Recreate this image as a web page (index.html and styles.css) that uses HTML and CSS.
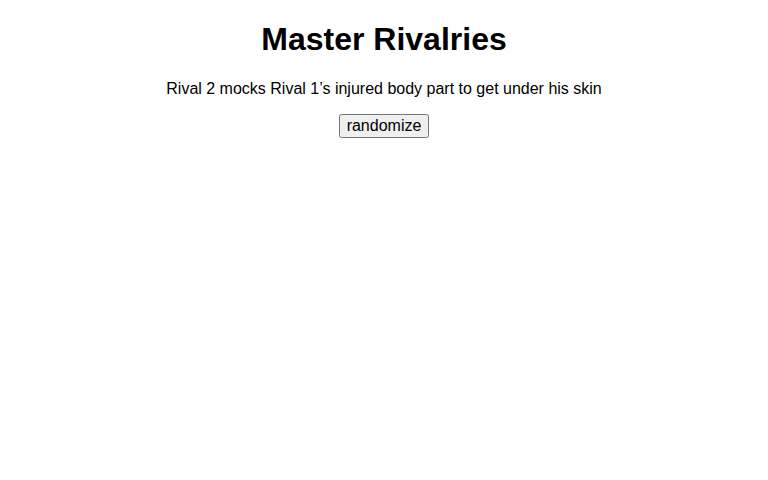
FILE: index.html
```html
<!DOCTYPE HTML>
<html>
<head>
    <title>Master Rivalries</title>
    <meta name="viewport" content="width=device-width, initial-scale=1">
    <link rel="stylesheet" href="styles.css">
</head>

<body>

    <h1>Master Rivalries</h1>

    <p id="rivalry">Rival 2 mocks Rival 1’s injured body part to get under his skin</p>
    <div>
        <button onclick="randomize()" class="butt">randomize</button>
    </div>

    <script>
        var lines = [
            "Rival 2 mocks Rival 1’s injured body part to get under his skin",
            "Rival 1 steals Rival 2’s title shot with a sneak attack",
            "Rival 2 costs Rival 1 his match by distracting the referee",
            "Rival 1 turns on Rival 2 after a tag team loss"
        ];

        function randomize() {
            var i = Math.floor(Math.random() * lines.length);
            document.getElementById("rivalry").innerHTML = lines[i];
        }
    </script>
</body>

</html>
```

FILE: styles.css
```css
html {
    font-family: "Liberation Sans", Arial, sans-serif;
    text-align: center;
}

body {
    margin: 0 8px 8px;
}

.butt {
    font-family: "Liberation Sans", Arial, sans-serif;
    font-size: 16px;
}
```
